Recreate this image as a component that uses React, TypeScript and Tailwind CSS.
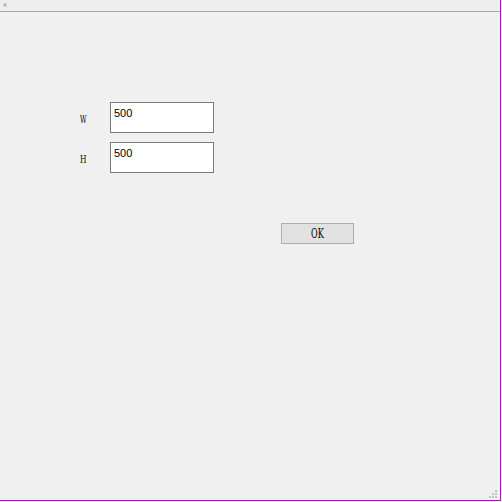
export default function App() {
  const labelFont = { fontFamily: '"DejaVu Serif Condensed", "DejaVu Serif", "Liberation Serif", serif' };
  return (
    <div className="w-[502px] h-[502px] bg-[#f0f0f0] overflow-hidden">
      <div className="relative w-[501px] h-[501px] border-r border-b border-[#a01aa8] flex flex-col">
        <div className="h-[12px] shrink-0 bg-[#eeeeee] border-b border-[#a8a8a8] pl-[3px] pt-[3px]">
          <div className="w-[4px] h-[4px] bg-[#b0b0b0] border border-[#d8d8d8]" />
        </div>
        <div className="flex-1 pt-[90px] pl-[80px]">
          <div className="flex flex-col gap-[9px]">
            <div className="flex items-center">
              <span className="w-[30px] flex mt-[3px]">
                <span className="inline-block origin-left scale-x-[0.65] text-[11px] leading-none text-black" style={labelFont}>
                  W
                </span>
              </span>
              <div className="w-[104px] h-[31px] bg-white border border-[#7a7a7a] pl-[3px] pt-[3px] text-[11px] leading-[14px] text-black font-['Liberation_Sans',sans-serif]">
                500
              </div>
            </div>
            <div className="flex items-center">
              <span className="w-[30px] flex mt-[3px]">
                <span className="inline-block origin-left scale-x-[0.75] text-[11px] leading-none text-black" style={labelFont}>
                  H
                </span>
              </span>
              <div className="w-[104px] h-[31px] bg-white border border-[#7a7a7a] pl-[3px] pt-[3px] text-[11px] leading-[14px] text-black font-['Liberation_Sans',sans-serif]">
                500
              </div>
            </div>
          </div>
          <div className="mt-[50px] ml-[201px]">
            <button className="w-[73px] h-[21px] bg-[#e1e1e1] border border-[#adadad] text-black flex items-center justify-center">
              <span className="inline-block scale-x-[0.75] text-[12px] leading-none" style={labelFont}>
                OK
              </span>
            </button>
          </div>
        </div>
        <div className="absolute right-[3px] bottom-[2px] grid grid-cols-3 gap-[1px]">
          <span className="w-[2px] h-[2px]" />
          <span className="w-[2px] h-[2px]" />
          <span className="w-[2px] h-[2px] bg-[#c4c4c4]" />
          <span className="w-[2px] h-[2px]" />
          <span className="w-[2px] h-[2px] bg-[#c4c4c4]" />
          <span className="w-[2px] h-[2px] bg-[#c4c4c4]" />
          <span className="w-[2px] h-[2px] bg-[#c4c4c4]" />
          <span className="w-[2px] h-[2px] bg-[#c4c4c4]" />
          <span className="w-[2px] h-[2px] bg-[#c4c4c4]" />
        </div>
      </div>
    </div>
  );
}
